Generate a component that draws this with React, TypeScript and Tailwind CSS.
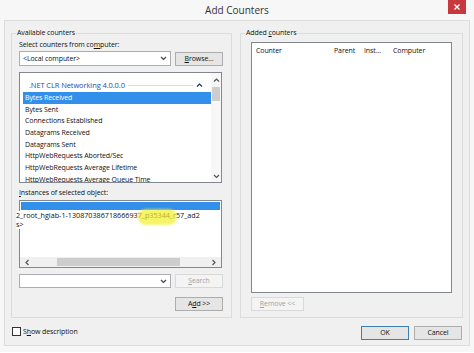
import React from "react"

function Chevron({ dir = "down", className = "" }: { dir?: "down" | "up" | "left" | "right"; className?: string }) {
  const d =
    dir === "down" ? "M1 2 L3.5 4.5 L6 2" : dir === "up" ? "M1 4.5 L3.5 2 L6 4.5" : dir === "left" ? "M4.5 1 L2 3.5 L4.5 6" : "M2.5 1 L5 3.5 L2.5 6"
  return (
    <svg width="7" height="7" viewBox="0 0 7 7" className={className}>
      <path d={d} fill="none" stroke="currentColor" strokeWidth="1.2" />
    </svg>
  )
}

function Btn({ children, disabled, primary, w }: { children: React.ReactNode; disabled?: boolean; primary?: boolean; w: string }) {
  return (
    <div
      className={`${w} h-[14px] flex items-center justify-center border ${
        disabled
          ? "border-[#d9d9d9] bg-[#f4f4f4] text-[#a3a3a3]"
          : primary
          ? "border-[#3c7fb1] bg-[#e5e5e5] text-[#111]"
          : "border-[#adadad] bg-[#e5e5e5] text-[#111]"
      }`}
    >
      {children}
    </div>
  )
}

const counters = [
  "Bytes Sent",
  "Connections Established",
  "Datagrams Received",
  "Datagrams Sent",
  "HttpWebRequests Aborted/Sec",
  "HttpWebRequests Average Lifetime",
  "HttpWebRequests Average Queue Time",
]

export default function App() {
  return (
    <div className="w-[474px] h-[353px] bg-white overflow-hidden font-['Open_Sans',sans-serif] text-[7px] leading-[10px] tracking-[-0.1px] text-[#111]">
      {/* title bar */}
      <div className="relative h-[20px] bg-[#f7f7f7] flex items-center justify-center">
        <span className="text-[10px] tracking-normal text-[#333]">Add Counters</span>
        <div className="absolute right-[8px] top-0 w-[18px] h-[14px] bg-[#c7393e] flex items-center justify-center">
          <svg width="6" height="6" viewBox="0 0 6 6">
            <path d="M0.5 0.5 L5.5 5.5 M5.5 0.5 L0.5 5.5" stroke="white" strokeWidth="1.3" />
          </svg>
        </div>
      </div>

      <div className="bg-[#f7f7f7] px-[4px] pb-[6px]">
        <div className="h-[326px] border border-[#dcdcdc] bg-[#f0f0f0] pt-[7px]">
          <div className="flex pl-[6px] gap-[8px]">
            {/* Available counters */}
            <fieldset className="w-[221px] h-[290px] border border-[#dcdcdc] p-0">
              <legend className="ml-[4px] px-[1px] leading-[10px]">Available counters</legend>
              <div className="px-[7px] flex flex-col">
                <div className="mt-[2px]">
                  Select counters from co<span className="underline">m</span>puter:
                </div>
                <div className="mt-[1px] flex items-center gap-[4px]">
                  <div className="w-[152px] h-[15px] bg-white border border-[#abadb3] flex items-center justify-between pl-[3px] pr-[3px]">
                    <span>&lt;Local computer&gt;</span>
                    <Chevron className="text-[#444]" />
                  </div>
                  <Btn w="w-[48px]">
                    <span className="underline">B</span>rowse...
                  </Btn>
                </div>

                <div className="mt-[6px] w-[203px] h-[111px] bg-white border border-[#828790] flex overflow-hidden">
                  <div className="flex-1 flex flex-col pt-[5px]">
                    <div className="h-[14px] shrink-0 flex items-center pl-[9px] pr-[8px] gap-[3px]">
                      <span className="text-[#1c4fae] text-[7.5px]">.NET CLR Networking 4.0.0.0</span>
                      <div className="flex-1 h-px bg-[#cfdcef]" />
                      <Chevron dir="up" className="text-[#1d3160]" />
                    </div>
                    <div className="ml-[3px] h-[11.7px] shrink-0 flex items-center pl-[2px] bg-[#3390ea] text-white">Bytes Received</div>
                    {counters.map((c) => (
                      <div key={c} className="ml-[3px] h-[11.7px] shrink-0 flex items-center pl-[2px]">
                        {c}
                      </div>
                    ))}
                  </div>
                  <div className="w-[10px] bg-[#f7f7f7] flex flex-col items-center pt-[4px] pb-[2px]">
                    <Chevron dir="up" className="text-[#555]" />
                    <div className="mt-[3px] w-[8px] h-[14px] bg-[#cdcdcd]" />
                    <div className="flex-1" />
                    <Chevron dir="down" className="text-[#555]" />
                  </div>
                </div>

                <div className="mt-[5px]">
                  <span className="underline">I</span>nstances of selected object:
                </div>
                <div className="relative mt-[2px] w-[203px] h-[68px] bg-white border border-[#828790] flex flex-col">
                  <div className="mx-px mt-px h-[8px] bg-[#3390ea]" />
                  <div className="relative -ml-[4px] mt-px w-[192px] bg-white leading-[9px] text-[7.2px] tracking-normal whitespace-nowrap">
                    <div>2_root_hglab-1-130870386718666937_p35344_r57_ad2</div>
                    <div>s&gt;</div>
                    <span className="absolute left-[122px] top-[-2px] w-[39px] h-[16px] rounded-full bg-[#f2ef2a]/70 blur-[1px]" />
                  </div>
                  <div className="flex-1" />
                  <div className="h-[10px] bg-[#f0f0f0] flex items-center px-[4px]">
                    <Chevron dir="left" className="text-[#555]" />
                    <div className="ml-[26px] w-[123px] h-[8px] bg-[#cdcdcd]" />
                    <div className="flex-1" />
                    <Chevron dir="right" className="text-[#555]" />
                  </div>
                </div>

                <div className="mt-[6px] flex items-center gap-[4px]">
                  <div className="w-[152px] h-[14px] bg-white border border-[#abadb3] flex items-center justify-end pr-[3px]">
                    <Chevron className="text-[#444]" />
                  </div>
                  <Btn w="w-[48px]" disabled>
                    <span className="underline">S</span>earch
                  </Btn>
                </div>
                <div className="mt-[9px] flex justify-end pr-[1px]">
                  <Btn w="w-[48px]">
                    A<span className="underline">d</span>d &gt;&gt;
                  </Btn>
                </div>
              </div>
            </fieldset>

            {/* Added counters */}
            <fieldset className="w-[223px] h-[290px] border border-[#dcdcdc] p-0">
              <legend className="ml-[4px] px-[1px] leading-[10px]">
                Added <span className="underline">c</span>ounters
              </legend>
              <div className="pl-[10px] flex flex-col">
                <div className="mt-[4px] w-[201px] h-[251px] bg-white border border-[#828790]">
                  <div className="h-[15px] flex items-center pt-[1px]">
                    <span className="w-[82px] pl-[4px]">Counter</span>
                    <span className="w-[30px]">Parent</span>
                    <span className="w-[29px]">Inst...</span>
                    <span>Computer</span>
                  </div>
                </div>
                <div className="mt-[4px]">
                  <Btn w="w-[53px]" disabled>
                    <span className="underline">R</span>emove &lt;&lt;
                  </Btn>
                </div>
              </div>
            </fieldset>
          </div>

          <div className="flex justify-between pl-[7px] pr-[7px]">
            <div className="mt-[5px] flex items-center gap-[2px]">
              <div className="w-[9px] h-[9px] bg-white border border-[#333]" />
              <span>
                S<span className="underline">h</span>ow description
              </span>
            </div>
            <div className="mt-[8px] flex gap-[5px]">
              <Btn w="w-[48px]" primary>
                OK
              </Btn>
              <Btn w="w-[48px]">Cancel</Btn>
            </div>
          </div>
        </div>
      </div>
    </div>
  )
}
